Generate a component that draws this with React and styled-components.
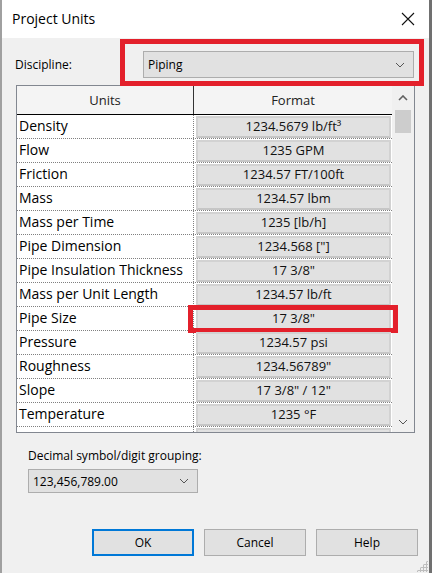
import styled, { createGlobalStyle } from "styled-components";

const GlobalStyle = createGlobalStyle`
  html, body {
    margin: 0;
    padding: 0;
    background: #f0f0f0;
  }
  body {
    font-family: "Open Sans", "Noto Sans", sans-serif;
    color: #000;
  }
`;

const Window = styled.div`
  width: 432px;
  height: 573px;
  box-sizing: border-box;
  border-left: 2px solid #a0a0a0;
  border-right: 3px solid #707070;
  background: #f0f0f0;
  display: flex;
  flex-direction: column;
  position: relative;
  overflow: hidden;
`;

const TitleBar = styled.div`
  height: 38px;
  flex: none;
  background: #fff;
  display: flex;
  align-items: center;
  justify-content: space-between;
  padding: 0 14px 0 10px;
`;

const Title = styled.div`
  font-size: 14px;
  padding-bottom: 1px;
`;

const CloseIcon = () => (
  <svg width="14" height="14" viewBox="0 0 14 14">
    <path d="M1 1 L13 13 M13 1 L1 13" stroke="#111" strokeWidth="1.1" fill="none" />
  </svg>
);

const Chevron = ({ up }) => (
  <svg width="10" height="6" viewBox="0 0 10 6">
    <path
      d={up ? "M1 5 L5 1 L9 5" : "M1 1 L5 5 L9 1"}
      stroke={up ? "#606060" : "#555"}
      strokeWidth={up ? "1.6" : "1"}
      fill="none"
    />
  </svg>
);

const DisciplineRow = styled.div`
  display: flex;
  align-items: flex-start;
  padding: 1px 5px 0 13px;
  height: 46px;
  flex: none;
`;

const Label = styled.div`
  font-size: 12px;
  width: ${({ width }) => width || "auto"};
  flex: none;
  padding-top: ${({ top }) => top || 0}px;
`;

const Highlight = styled.div`
  flex: 1;
  border: 5px solid #e3202b;
  padding: 7px 5px 3px 18px;
  position: relative;
  z-index: 2;
`;

const Combo = styled.div`
  height: ${({ height }) => height || 27}px;
  box-sizing: border-box;
  width: ${({ width }) => width || "auto"};
  background: #e1e1e1;
  border: 1px solid #adadad;
  display: flex;
  align-items: center;
  justify-content: space-between;
  padding: 0 8px 0 4px;
  font-size: 12px;
`;

const Grid = styled.div`
  margin: 0 14px;
  height: 348px;
  flex: none;
  box-sizing: border-box;
  border: 1px solid #828790;
  background: #fff;
  display: flex;
`;

const Columns = styled.div`
  flex: 1;
  display: flex;
  flex-direction: column;
  position: relative;
  z-index: 1;
  clip-path: inset(0 -12px 0 -12px);
`;

const HeaderRow = styled.div`
  display: flex;
  height: 28px;
  flex: none;
  background: #f4f4f4;
  border-bottom: 1px solid #000;
`;

const HeaderCell = styled.div`
  width: ${({ width }) => width};
  flex: ${({ grow }) => (grow ? 1 : "none")};
  box-sizing: border-box;
  display: flex;
  align-items: center;
  justify-content: center;
  font-size: 13px;
  color: #222;
  border-right: ${({ divider }) => (divider ? "1px solid #333" : "none")};
`;

const Row = styled.div`
  display: flex;
  height: 24px;
  flex: none;
  box-sizing: border-box;
  border-bottom: 1px dotted #808080;
`;

const NameCell = styled.div`
  width: 177px;
  flex: none;
  box-sizing: border-box;
  border-right: 1px dotted #808080;
  padding: 0 0 3px 2px;
  font-size: 14px;
  display: flex;
  align-items: center;
  white-space: nowrap;
  overflow: hidden;
`;

const FormatCell = styled.div`
  flex: 1;
  padding: 1px 1px 0 2px;
  display: flex;
  position: relative;

  &::after {
    content: "";
    display: ${({ marked }) => (marked ? "block" : "none")};
    position: absolute;
    left: -6px;
    right: -6px;
    top: -2px;
    bottom: -3px;
    border: 5px solid #e3202b;
    pointer-events: none;
  }
`;

const FormatButton = styled.div`
  flex: 1;
  background: #e1e1e1;
  border: 2px solid #d2d2d2;
  border-bottom-color: #c6c6c6;
  display: flex;
  align-items: center;
  justify-content: center;
  padding-bottom: 2px;
  font-size: 13px;
  color: #111;
  white-space: nowrap;
`;

const ScrollBar = styled.div`
  width: 22px;
  flex: none;
  background: #f0f0f0;
  display: flex;
  flex-direction: column;
  align-items: center;
`;

const ScrollArrow = styled.div`
  height: 20px;
  display: flex;
  align-items: center;
  justify-content: center;
  padding-top: ${({ bottom }) => (bottom ? "0" : "2px")};
`;

const Thumb = styled.div`
  width: 16px;
  height: 23px;
  background: #cdcdcd;
  margin-top: 2px;
`;

const Spacer = styled.div`
  flex: 1;
`;

const GroupingSection = styled.div`
  padding: 14px 0 0 26px;
  display: flex;
  flex-direction: column;
  gap: 5px;
`;

const Buttons = styled.div`
  margin-top: auto;
  display: flex;
  justify-content: flex-end;
  gap: 10px;
  padding: 0 11px 17px 0;
`;

const Button = styled.div`
  width: 102px;
  height: 27px;
  box-sizing: border-box;
  background: #e1e1e1;
  border: ${({ primary }) => (primary ? "2px solid #0078d7" : "1px solid #adadad")};
  display: flex;
  align-items: center;
  justify-content: center;
  font-size: 12px;
`;

const Grip = styled.div`
  position: absolute;
  right: 1px;
  bottom: 1px;
  width: 12px;
  height: 12px;
  background-image: radial-gradient(circle, #bdbdbd 1px, transparent 1.3px);
  background-size: 3px 3px;
  clip-path: polygon(100% 0, 100% 100%, 0 100%);
`;

const rows = [
  ["Density", "1234.5679 lb/ft³"],
  ["Flow", "1235 GPM"],
  ["Friction", "1234.57 FT/100ft"],
  ["Mass", "1234.57 lbm"],
  ["Mass per Time", "1235 [lb/h]"],
  ["Pipe Dimension", '1234.568 ["]'],
  ["Pipe Insulation Thickness", '17 3/8"'],
  ["Mass per Unit Length", "1234.57 lb/ft"],
  ["Pipe Size", '17 3/8"', true],
  ["Pressure", "1234.57 psi"],
  ["Roughness", '1234.56789"'],
  ["Slope", '17 3/8" / 12"'],
  ["Temperature", "1235 °F"],
  ["Velocity", "1234.57 FPS"],
];

const App = () => {
  return (
    <>
      <GlobalStyle />
      <Window>
        <TitleBar>
          <Title>Project Units</Title>
          <CloseIcon />
        </TitleBar>
        <DisciplineRow>
          <Label width="105px" top={17}>
            Discipline:
          </Label>
          <Highlight>
            <Combo>
              Piping
              <Chevron />
            </Combo>
          </Highlight>
        </DisciplineRow>
        <Grid>
          <Columns>
            <HeaderRow>
              <HeaderCell width="177px" divider>
                Units
              </HeaderCell>
              <HeaderCell grow>Format</HeaderCell>
            </HeaderRow>
            {rows.map(([name, format, marked]) => (
              <Row key={name}>
                <NameCell>{name}</NameCell>
                <FormatCell marked={marked}>
                  <FormatButton>{format}</FormatButton>
                </FormatCell>
              </Row>
            ))}
          </Columns>
          <ScrollBar>
            <ScrollArrow>
              <Chevron up />
            </ScrollArrow>
            <Thumb />
            <Spacer />
            <ScrollArrow bottom>
              <Chevron />
            </ScrollArrow>
          </ScrollBar>
        </Grid>
        <GroupingSection>
          <Label>Decimal symbol/digit grouping:</Label>
          <Combo width="170px" height={24}>
            123,456,789.00
            <Chevron />
          </Combo>
        </GroupingSection>
        <Buttons>
          <Button primary>OK</Button>
          <Button>Cancel</Button>
          <Button>Help</Button>
        </Buttons>
        <Grip />
      </Window>
    </>
  );
};

export default App;
